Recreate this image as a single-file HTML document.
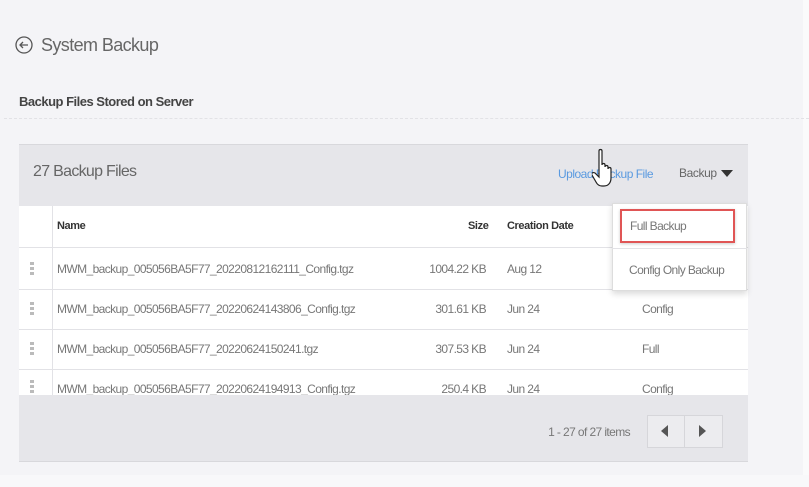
<!DOCTYPE html>
<html><head><style>
*{margin:0;padding:0;box-sizing:border-box}
body{width:809px;height:487px;background:#f4f4f7;font-family:"Liberation Sans",sans-serif;color:#555;position:relative;overflow:hidden}
.a{position:absolute;white-space:nowrap}
.t{letter-spacing:-0.6px;font-size:12px;color:#777}
.h{font-size:11px;font-weight:bold;color:#333;letter-spacing:-0.4px}
.row{position:absolute;left:19px;width:729px;height:1px;background:#e2e2e6}
.dg{position:absolute;width:4px;height:14px;background:repeating-linear-gradient(#bbb 0 3px,transparent 3px 5px)}
</style></head><body>
<div class="a" style="left:803px;top:0;width:6px;height:487px;background:#fafafb"></div>
<div class="a" style="left:0;top:475px;width:809px;height:12px;background:#f8f8fa"></div>
<svg class="a" style="left:14px;top:35px" width="20" height="20" viewBox="0 0 20 20"><circle cx="10" cy="10" r="8" fill="none" stroke="#555" stroke-width="1.3"/><path d="M14 10H6M9 7l-3 3 3 3" fill="none" stroke="#555" stroke-width="1.3"/></svg>
<div class="a" style="left:41px;top:35px;font-size:18px;color:#666;letter-spacing:-0.6px">System Backup</div>
<div class="a" style="left:19px;top:94px;font-size:13px;font-weight:bold;color:#444;letter-spacing:-0.5px">Backup Files Stored on Server</div>
<div class="a" style="left:4px;top:118px;width:805px;border-top:1px dashed #e2e2e6"></div>
<div class="a" style="left:19px;top:144px;width:729px;height:318px;background:#e6e6ea;border-top:1px solid #d8d8dc;border-bottom:1px solid #d8d8dc"></div>
<div class="a" style="left:33px;top:163px;font-size:16px;color:#666;letter-spacing:-0.7px">27 Backup Files</div>
<div class="a" style="left:558px;top:167px;font-size:12px;color:#5a9ae0;letter-spacing:-0.5px">Upload Backup File</div>
<div class="a" style="left:679px;top:166px;font-size:12px;color:#666;letter-spacing:-0.4px">Backup</div>
<div class="a" style="left:721px;top:170px;width:0;height:0;border-left:6px solid transparent;border-right:6px solid transparent;border-top:7px solid #333"></div>
<div class="a" style="left:19px;top:206px;width:729px;height:189px;background:#fff"></div>
<div class="a" style="left:52px;top:206px;width:1px;height:189px;background:#e2e2e6"></div>
<div class="row" style="top:247px"></div><div class="row" style="top:289px"></div><div class="row" style="top:329px"></div><div class="row" style="top:369px"></div>
<div class="a h" style="left:57px;top:220px">Name</div>
<div class="a h" style="left:468px;top:220px">Size</div>
<div class="a h" style="left:507px;top:220px">Creation Date</div>
<div class="dg" style="left:30px;top:262px"></div>
<div class="dg" style="left:30px;top:302px"></div>
<div class="dg" style="left:30px;top:342px"></div>
<div class="dg" style="left:30px;top:380px;height:14px"></div>
<div class="a t" style="left:57px;top:262px">MWM_backup_005056BA5F77_20220812162111_Config.tgz</div>
<div class="a t" style="right:323px;top:262px">1004.22 KB</div><div class="a t" style="left:507px;top:262px">Aug 12</div>
<div class="a t" style="left:57px;top:302px">MWM_backup_005056BA5F77_20220624143806_Config.tgz</div>
<div class="a t" style="right:323px;top:302px">301.61 KB</div><div class="a t" style="left:507px;top:302px">Jun 24</div><div class="a t" style="left:642px;top:302px">Config</div>
<div class="a t" style="left:57px;top:342px">MWM_backup_005056BA5F77_20220624150241.tgz</div>
<div class="a t" style="right:323px;top:342px">307.53 KB</div><div class="a t" style="left:507px;top:342px">Jun 24</div><div class="a t" style="left:642px;top:342px">Full</div>
<div class="a" style="left:19px;top:370px;width:729px;height:25px;overflow:hidden">
<div class="a t" style="left:38px;top:12px">MWM_backup_005056BA5F77_20220624194913_Config.tgz</div>
<div class="a t" style="right:262px;top:12px">250.4 KB</div><div class="a t" style="left:488px;top:12px">Jun 24</div><div class="a t" style="left:623px;top:12px">Config</div>
</div>
<div class="a t" style="right:179px;top:425px">1 - 27 of 27 items</div>
<div class="a" style="left:647px;top:415px;width:76px;height:33px;border:1px solid #d6d6da;background:#ececef"></div>
<div class="a" style="left:684px;top:415px;width:1px;height:33px;background:#d6d6da"></div>
<div class="a" style="left:661px;top:425px;width:0;height:0;border-top:6px solid transparent;border-bottom:6px solid transparent;border-right:7px solid #555"></div>
<div class="a" style="left:699px;top:425px;width:0;height:0;border-top:6px solid transparent;border-bottom:6px solid transparent;border-left:7px solid #555"></div>
<div class="a" style="left:612px;top:203px;width:135px;height:88px;background:#fff;border:1px solid #ddd;box-shadow:0 3px 6px rgba(0,0,0,.15)"></div>
<div class="a" style="left:612px;top:248px;width:135px;height:1px;background:#e2e2e6"></div>
<div class="a" style="left:620px;top:209px;width:115px;height:34px;border:2px solid #e05555;box-shadow:0 1px 3px rgba(0,0,0,.2)"></div>
<div class="a t" style="left:630px;top:219px">Full Backup</div>
<div class="a t" style="left:629px;top:263px">Config Only Backup</div>
<svg class="a" style="left:592px;top:148px" width="26" height="40" viewBox="0 0 26 40"><path d="M7 3c0-2 3-2 3 0v14c0-2 3-2 3 0v2c0-2 3-2 3 0v2c0-2 3-2 3 0v9c0 5-3 8-7 8h-2c-3 0-5-2-6-4l-4-7c-1-2 1-3 3-2l4 4z" fill="#fff" stroke="#222" stroke-width="1.2"/></svg>
</body></html>
